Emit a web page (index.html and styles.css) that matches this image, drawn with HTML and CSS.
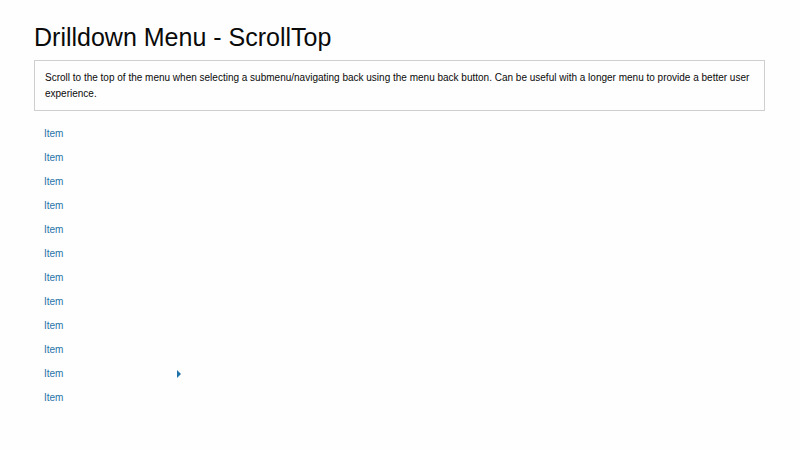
FILE: index.html
```html
<!DOCTYPE html>
<html>
<head>
<meta charset="utf-8">
<link rel="stylesheet" href="styles.css">
</head>
<body>
<div class="page">
  <h1 class="title">Drilldown Menu - ScrollTop</h1>
  <div class="callout">
    <p>Scroll to the top of the menu when selecting a submenu/navigating back using the menu back button. Can be useful with a longer menu to provide a better user experience.</p>
  </div>
  <ul class="menu">
    <li><a href="#">Item</a></li>
    <li><a href="#">Item</a></li>
    <li><a href="#">Item</a></li>
    <li><a href="#">Item</a></li>
    <li><a href="#">Item</a></li>
    <li><a href="#">Item</a></li>
    <li><a href="#">Item</a></li>
    <li><a href="#">Item</a></li>
    <li><a href="#">Item</a></li>
    <li><a href="#">Item</a></li>
    <li><a href="#" class="parent">Item</a></li>
    <li><a href="#">Item</a></li>
  </ul>
</div>
</body>
</html>
```
FILE: styles.css
```css
html, body {
  margin: 0;
  padding: 0;
  background: #fefefe;
  color: #0a0a0a;
  font-family: "Liberation Sans", Arial, sans-serif;
}
.page {
  padding: 20px 35px 0 34px;
}
.title {
  margin: 0 0 5px 0;
  font-size: 25px;
  font-weight: 400;
  line-height: 35px;
}
.callout {
  border: 1px solid #cfcfcf;
  padding: 9px 10px 8px 10px;
  margin-bottom: 11px;
}
.callout p {
  margin: 0;
  font-size: 10px;
  line-height: 16px;
}
.menu {
  list-style: none;
  margin: 0;
  padding: 0;
  width: 157px;
}
.menu a {
  position: relative;
  display: block;
  padding: 7px 10px;
  font-size: 10px;
  line-height: 10px;
  color: #1f73a8;
  text-decoration: none;
}
.menu a.parent::after {
  content: "";
  position: absolute;
  right: 10px;
  top: 50%;
  margin-top: -4px;
  border: 4px solid transparent;
  border-left-color: #1f73a8;
  border-right-width: 0;
}
```
